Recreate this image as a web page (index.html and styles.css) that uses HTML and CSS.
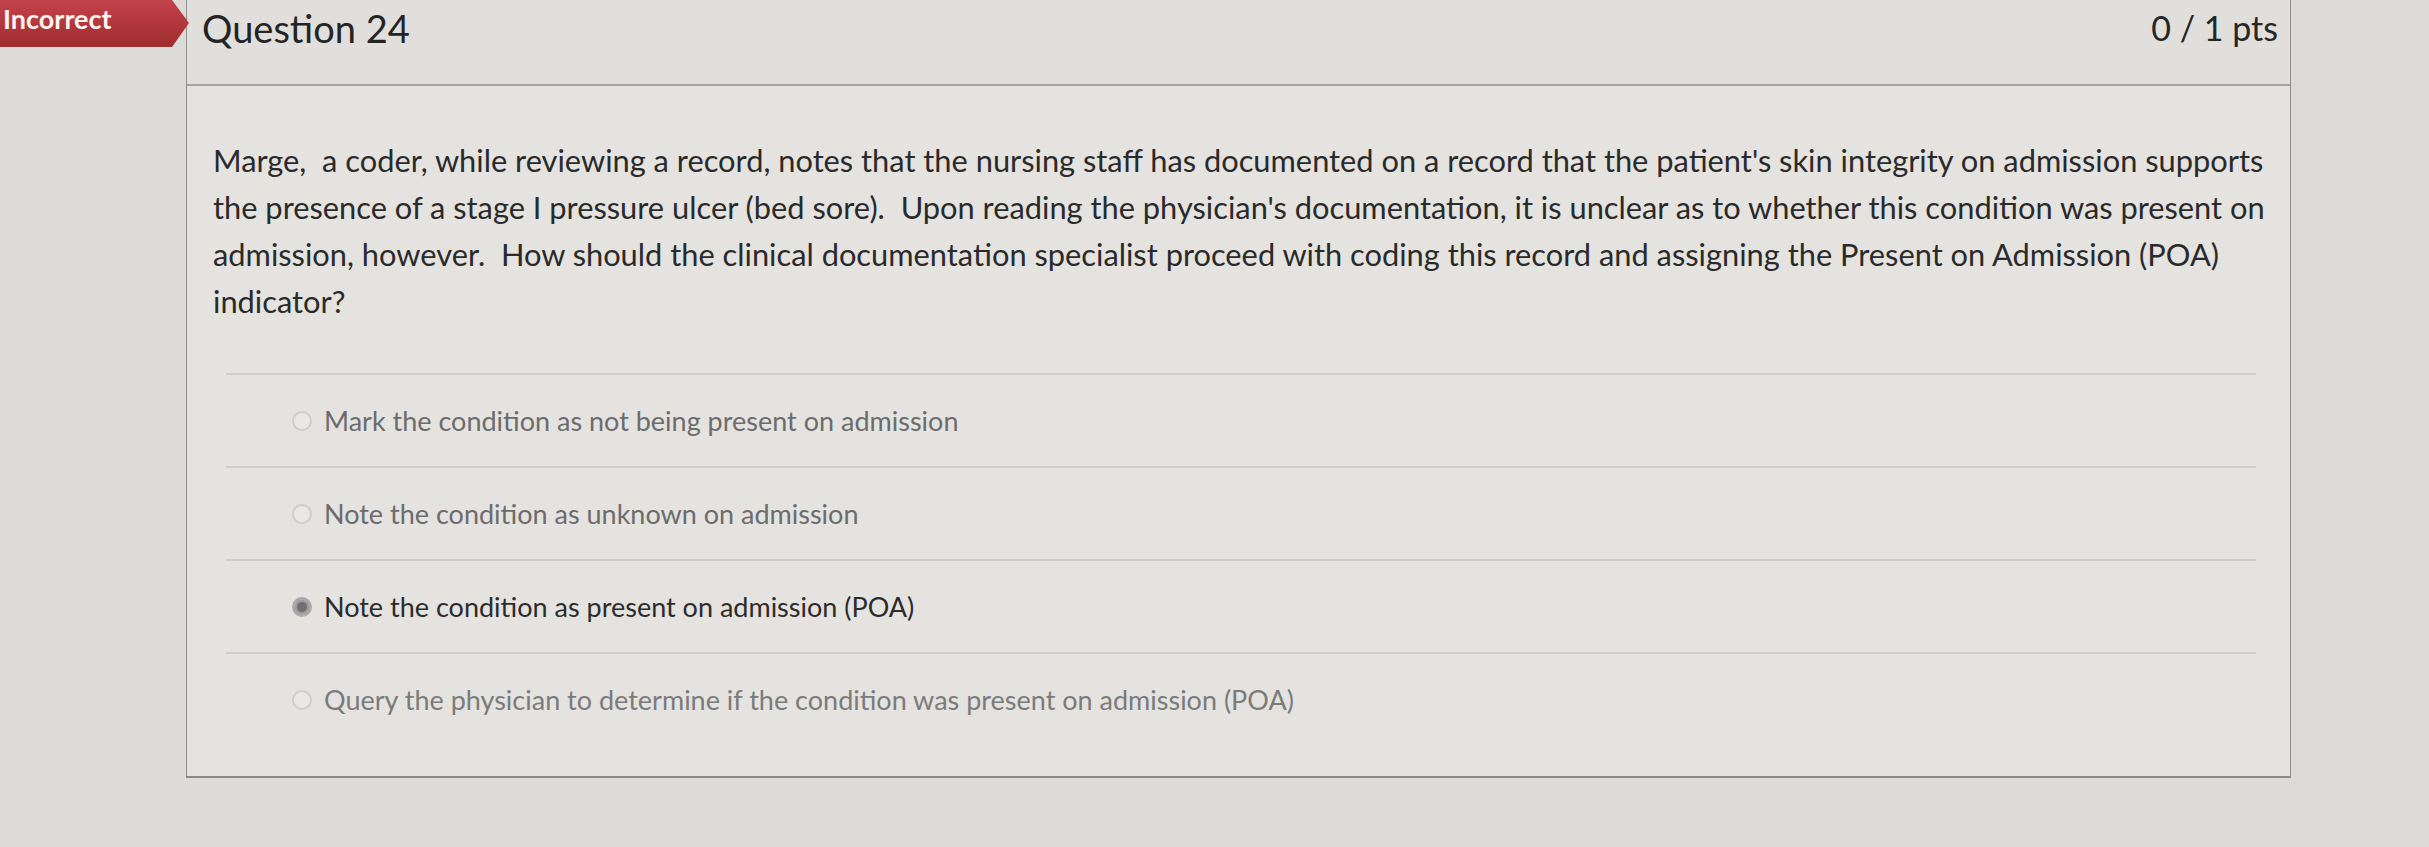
FILE: index.html
```html
<!DOCTYPE html>
<html lang="en">
<head>
<meta charset="utf-8">
<title>Question 24</title>
<link rel="stylesheet" href="styles.css">
</head>
<body>
<div class="page">
  <div class="badge">Incorrect</div>
  <div class="card">
    <div class="card-header">
      <div class="q-title">Question 24</div>
      <div class="q-points">0 / 1 pts</div>
    </div>
    <div class="card-body">
      <p class="q-text">Marge,&nbsp; a coder, while reviewing a record, notes that the nursing staff has documented on a record that the patient's skin integrity on admission supports the presence of a stage I pressure ulcer (bed sore).&nbsp; Upon reading the physician's documentation, it is unclear as to whether this condition was present on admission, however.&nbsp; How should the clinical documentation specialist proceed with coding this record and assigning the Present on Admission (POA) indicator?</p>
      <div class="answers">
        <div class="answer">
          <span class="radio"></span>
          <span class="answer-text">Mark the condition as not being present on admission</span>
        </div>
        <div class="answer">
          <span class="radio"></span>
          <span class="answer-text">Note the condition as unknown on admission</span>
        </div>
        <div class="answer selected">
          <span class="radio"></span>
          <span class="answer-text">Note the condition as present on admission (POA)</span>
        </div>
        <div class="answer faint">
          <span class="radio"></span>
          <span class="answer-text">Query the physician to determine if the condition was present on admission (POA)</span>
        </div>
      </div>
    </div>
  </div>
</div>
</body>
</html>
```

FILE: styles.css
```css
html, body {
  margin: 0;
  padding: 0;
}
body {
  background: #dddbd8;
  font-family: Lato, "Open Sans", "Liberation Sans", sans-serif;
  width: 2429px;
  height: 847px;
  overflow: hidden;
}
.page {
  position: relative;
  padding-left: 186px;
  padding-right: 138px;
}
.badge {
  position: absolute;
  left: 0;
  top: 0;
  width: 189px;
  height: 47px;
  box-sizing: border-box;
  padding-left: 3px;
  padding-top: 4px;
  color: #fbf3f2;
  font-weight: 700;
  font-size: 27px;
  line-height: 30px;
  background: linear-gradient(180deg, #c2434a 0%, #b1363a 55%, #9c2c2d 100%);
  clip-path: polygon(0 0, 172px 0, 189px 23px, 172px 47px, 0 47px);
  z-index: 2;
}
.card {
  background: #e4e3e0;
  border-left: 1px solid #8f8f8f;
  border-right: 1px solid #8f8f8f;
  border-bottom: 2px solid #8a8a8a;
  height: 778px;
  box-sizing: border-box;
}
.card-header {
  height: 86px;
  box-sizing: border-box;
  border-bottom: 2px solid #a5a4a2;
  background: #e0dfdc;
  display: flex;
  justify-content: space-between;
  align-items: flex-start;
  padding: 0 12px 0 15px;
  line-height: 56px;
}
.q-title {
  font-size: 38px;
  color: #242424;
}
.q-points {
  font-size: 34px;
  color: #262626;
}
.card-body {
  padding: 51px 22px 0 26px;
}
.q-text {
  margin: 0;
  font-size: 30.8px;
  line-height: 47px;
  color: #2a2a2a;
}
.answers {
  margin-top: 48px;
  margin-left: 13px;
  margin-right: 12px;
}
.answer {
  border-top: 2px solid #cfcecb;
  height: 93px;
  box-sizing: border-box;
  display: flex;
  align-items: center;
  padding-left: 66px;
  gap: 12px;
  font-size: 27px;
  color: #6c6c6c;
}
.radio {
  width: 16px;
  height: 16px;
  border-radius: 50%;
  border: 2px solid #cdcdcb;
  background: #e9e8e6;
  flex: none;
}
.answer.selected {
  color: #2c2c2c;
}
.answer.selected .radio {
  border: 3px solid #a9a9a9;
  background: radial-gradient(circle, #6f6f6f 0 45%, #9a9a9a 55%);
  width: 14px;
  height: 14px;
}
.answer.faint {
  color: #7b7b7b;
}
```
